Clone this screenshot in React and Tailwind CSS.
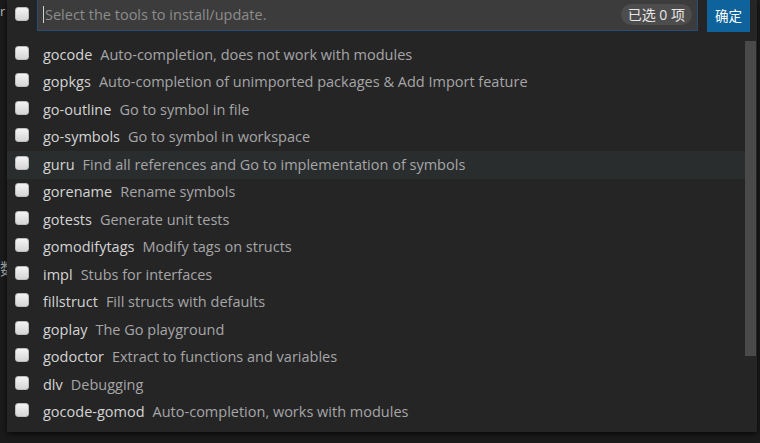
import React from "react";

const tools = [
  ["gocode", "Auto-completion, does not work with modules"],
  ["gopkgs", "Auto-completion of unimported packages & Add Import feature"],
  ["go-outline", "Go to symbol in file"],
  ["go-symbols", "Go to symbol in workspace"],
  ["guru", "Find all references and Go to implementation of symbols"],
  ["gorename", "Rename symbols"],
  ["gotests", "Generate unit tests"],
  ["gomodifytags", "Modify tags on structs"],
  ["impl", "Stubs for interfaces"],
  ["fillstruct", "Fill structs with defaults"],
  ["goplay", "The Go playground"],
  ["godoctor", "Extract to functions and variables"],
  ["dlv", "Debugging"],
  ["gocode-gomod", "Auto-completion, works with modules"],
];

function Box() {
  return (
    <span className="block w-[14px] h-[14px] rounded-[3px] bg-gradient-to-b from-[#f4f4f4] to-[#d6d6d6] border border-[#bdbdbd]" />
  );
}

export default function App() {
  return (
    <div
      className="relative w-[760px] h-[443px] bg-[#1b1b1b] overflow-hidden"
      style={{ fontFamily: '"Open Sans", "Noto Sans CJK SC", sans-serif' }}
    >
      {/* stuff behind the picker */}
      <div className="absolute left-0 top-[2px] text-[13px] text-[#bbb]">r</div>
      <div className="absolute left-0 top-[257px] text-[16px] text-[#aaa]">数</div>

      <div className="absolute left-[7px] top-0 w-[750px] h-[432px] bg-[#252526] shadow-[0_2px_6px_rgba(0,0,0,0.7)]">
        {/* header */}
        <div className="flex items-start h-[41px]">
          <div className="w-[30px] pl-[8px] pt-[7px]">
            <Box />
          </div>
          <div className="-mt-[2px] w-[661px] h-[33px] bg-[#3c3c3c] border border-[#264f78] flex items-center pl-[5px] pr-[5px]">
            <span className="w-px h-[17px] bg-[#d0d0d0] mr-[1px]" />
            <span className="text-[14.5px] text-[#8c8c8c] flex-1">Select the tools to install/update.</span>
            <span className="h-[21px] px-[7px] rounded-full bg-[#4d4d4d] text-[14px] text-[#e6e6e6] flex items-center">已选 0 项</span>
          </div>
          <div className="ml-[9px] w-[43px] h-[32px] bg-[#0e639c] text-white text-[13.5px] flex items-center justify-center">确定</div>
        </div>

        {/* list */}
        <div className="flex">
          <div className="flex-1">
            {tools.map(([name, desc]) => (
              <div
                key={name}
                className={`flex items-center h-[27.5px] ${name === "guru" ? "bg-[#2a2d2e]" : ""}`}
              >
                <div className="w-[36px] pl-[8px] -mt-[4px]">
                  <Box />
                </div>
                <span className="text-[14.5px] text-[#d4d4d4]">{name}</span>
                <span className="ml-[8px] text-[14.5px] text-[#a6a6a6]">{desc}</span>
              </div>
            ))}
          </div>
          <div className="w-[12px]">
            <div className="w-[11px] h-[315px] bg-[#4a4a4a]" />
          </div>
        </div>
      </div>
    </div>
  );
}
